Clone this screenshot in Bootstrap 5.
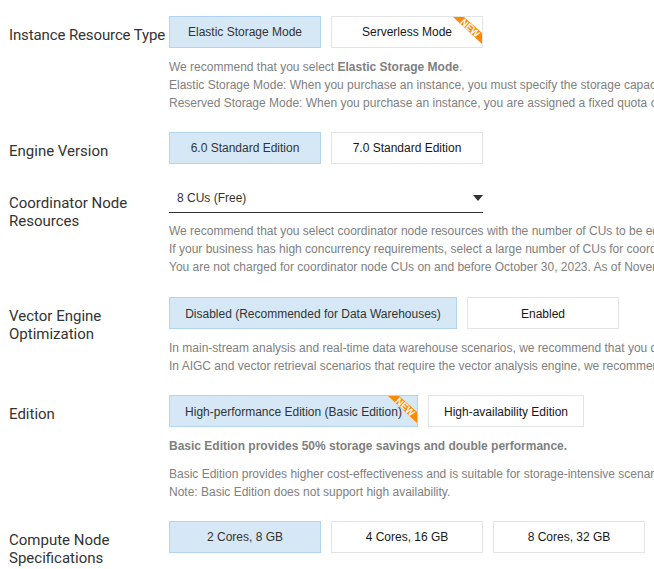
<!DOCTYPE html>
<html lang="en"><head><meta charset="utf-8"><title>Instance configuration</title>
<link href="https://cdn.jsdelivr.net/npm/bootstrap@5.3.0/dist/css/bootstrap.min.css" rel="stylesheet">
<style>
html,body{height:569px;overflow:hidden;background:#fff}
body{font-family:"Liberation Sans",Arial,sans-serif;font-size:12px;color:#333;padding:16px 0 0 9px;width:654px}
.cfg-row{display:flex;margin-top:20px}
.cfg-row-first{margin-top:0}
.cfg-row-after-plain{margin-top:18px}
.cfg-row-after-pick{margin-top:21px}
.cfg-label{width:160px;flex:none;font-family:Roboto,sans-serif;font-size:15px;line-height:18px;color:#333;padding-top:10px;margin:0}
.cfg-label-nowrap{white-space:nowrap;letter-spacing:-.12px}
.cfg-label-low{padding-top:12px}
.cfg-body{flex:none;width:485px;overflow:hidden}
.opt-list{display:flex;gap:10px}
.opt{position:relative;width:152px;height:32px;flex:none;display:flex;align-items:center;justify-content:center;border:1px solid #e3e4e6;background:#fff;color:#181818;font-size:12px;overflow:hidden;white-space:nowrap;padding:0}
.opt-on{background:#d6e8f5;border-color:#b1d4f0;color:#333}
.opt-low{padding-top:1px}
.opt-wide{width:288px}
.opt-basic{width:249px}
.opt-mid{width:156px}
.ribbon{position:absolute;top:-1px;right:-1px;width:32px;height:30px}
.hint{margin:10px 0 0;color:#808080;line-height:18px;white-space:nowrap}
.hint-tight{margin-top:9px}
.hint-lead{font-weight:700}
.hint-b{font-weight:700}
.pick{width:314px;height:31px;border-bottom:1px solid #333;display:flex;align-items:center;justify-content:space-between;padding:2px 0 0 8px;color:#333}
</style></head>
<body>
<div class="cfg-row cfg-row-first">
  <p class="cfg-label cfg-label-nowrap">Instance Resource Type</p>
  <div class="cfg-body">
    <div class="opt-list">
      <div class="opt opt-on">Elastic Storage Mode</div>
      <div class="opt">Serverless Mode
        <svg class="ribbon" viewBox="0 0 32 30"><polygon points="1,0 12,0 32,18 32,29" fill="#ff8a00"/><text transform="translate(19.3,11.7) rotate(43)" y="3.4" text-anchor="middle" font-family="Liberation Sans" font-size="9.5" font-weight="700" fill="#fff">NEW</text></svg>
      </div>
    </div>
    <p class="hint">We recommend that you select <span class="hint-b">Elastic Storage Mode</span>.<br>Elastic Storage Mode: When you purchase an instance, you must specify the storage capacity of the instance.<br>Reserved Storage Mode: When you purchase an instance, you are assigned a fixed quota of resources.</p>
  </div>
</div>
<div class="cfg-row">
  <p class="cfg-label">Engine Version</p>
  <div class="cfg-body"><div class="opt-list"><div class="opt opt-on">6.0 Standard Edition</div><div class="opt">7.0 Standard Edition</div></div></div>
</div>
<div class="cfg-row cfg-row-after-plain">
  <p class="cfg-label cfg-label-low">Coordinator Node Resources</p>
  <div class="cfg-body">
    <div class="pick"><span>8 CUs (Free)</span><svg width="10" height="6" viewBox="0 0 10 6"><polygon points="0,0 10,0 5,6" fill="#333"/></svg></div>
    <p class="hint hint-tight">We recommend that you select coordinator node resources with the number of CUs to be equal to the number of compute CUs.<br>If your business has high concurrency requirements, select a large number of CUs for coordinator nodes.<br>You are not charged for coordinator node CUs on and before October 30, 2023. As of November 1, 2023, you are charged.</p>
  </div>
</div>
<div class="cfg-row cfg-row-after-pick">
  <p class="cfg-label">Vector Engine Optimization</p>
  <div class="cfg-body">
    <div class="opt-list"><div class="opt opt-on opt-wide opt-low">Disabled (Recommended for Data Warehouses)</div><div class="opt opt-low">Enabled</div></div>
    <p class="hint">In main-stream analysis and real-time data warehouse scenarios, we recommend that you disable this feature.<br>In AIGC and vector retrieval scenarios that require the vector analysis engine, we recommend that you enable it.</p>
  </div>
</div>
<div class="cfg-row">
  <p class="cfg-label">Edition</p>
  <div class="cfg-body">
    <div class="opt-list"><div class="opt opt-on opt-basic opt-low">High-performance Edition (Basic Edition)
      <svg class="ribbon" viewBox="0 0 32 30"><polygon points="1,0 12,0 32,18 32,29" fill="#ff8a00"/><text transform="translate(19.3,11.7) rotate(43)" y="3.4" text-anchor="middle" font-family="Liberation Sans" font-size="9.5" font-weight="700" fill="#fff">NEW</text></svg>
    </div><div class="opt opt-mid opt-low">High-availability Edition</div></div>
    <p class="hint hint-lead">Basic Edition provides 50% storage savings and double performance.</p>
    <p class="hint">Basic Edition provides higher cost-effectiveness and is suitable for storage-intensive scenarios.<br>Note: Basic Edition does not support high availability.</p>
  </div>
</div>
<div class="cfg-row">
  <p class="cfg-label">Compute Node Specifications</p>
  <div class="cfg-body"><div class="opt-list"><div class="opt opt-on">2 Cores, 8 GB</div><div class="opt">4 Cores, 16 GB</div><div class="opt">8 Cores, 32 GB</div></div></div>
</div>
<script src="https://cdn.jsdelivr.net/npm/bootstrap@5.3.0/dist/js/bootstrap.bundle.min.js"></script>
</body></html>
